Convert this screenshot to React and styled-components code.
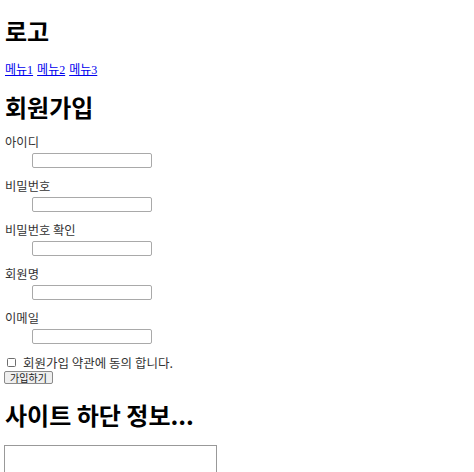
import styled, { createGlobalStyle } from "styled-components";

const GlobalStyle = createGlobalStyle`
  body {
    margin: 0;
    background: #fff;
    font-family: "Noto Sans CJK KR", "Noto Sans", sans-serif;
    color: #222;
  }
`;

const Page = styled.div`
  display: flex;
  flex-direction: column;
  align-items: flex-start;
  padding: 0 5px;
`;

const Title = styled.h1`
  margin: ${(p) => p.$top}px 0 0;
  font-size: 24px;
  line-height: 30px;
  font-weight: 700;
  color: #000;
`;

const Nav = styled.nav`
  display: flex;
  gap: 4px;
  margin-top: 16px;
  font-size: 12px;
  line-height: 16px;
`;

const NavLink = styled.a`
  color: #0000ee;
  text-decoration: underline;
  font-family: "Liberation Serif", "Noto Sans CJK KR", serif;
`;

const Form = styled.form`
  display: flex;
  flex-direction: column;
  align-items: flex-start;
  margin-top: 14px;
`;

const Field = styled.div`
  display: flex;
  flex-direction: column;
  margin-bottom: 12.5px;
`;

const Label = styled.label`
  font-size: 12.3px;
  line-height: 13px;
  padding-bottom: 3px;
  color: #333;
`;

const TextInput = styled.input`
  box-sizing: border-box;
  width: 120px;
  height: 15px;
  margin: 0.5px 0 0 27px;
  padding: 0 2px;
  border: 1px solid #a9a9a9;
  border-radius: 2px;
  font-size: 10px;
`;

const Agree = styled.label`
  display: flex;
  align-items: center;
  gap: 7px;
  margin: -2px 0 0 2px;
  height: 16px;
  font-size: 12.5px;
  color: #333;
`;

const Check = styled.input`
  appearance: none;
  box-sizing: border-box;
  width: 9px;
  height: 9px;
  margin: 0;
  border: 1px solid #6d6d6d;
  border-radius: 1.5px;
  background: #fff;
`;

const Submit = styled.button`
  box-sizing: border-box;
  width: 49px;
  height: 13px;
  margin: 1px 0 0 -1px;
  padding: 0;
  border: 1px solid #8a8a8a;
  border-radius: 2px;
  background: #efefef;
  font-family: inherit;
  font-size: 10px;
  line-height: 11px;
  color: #222;
`;

const FooterBox = styled.textarea`
  box-sizing: border-box;
  width: 213px;
  height: 40px;
  margin: 14.5px 0 0 -1px;
  border: 1px solid #999;
  border-top-width: 1.5px;
  resize: none;
`;

const fields = ["아이디", "비밀번호", "비밀번호 확인", "회원명", "이메일"];

export default function App() {
  return (
    <>
      <GlobalStyle />
      <Page>
        <Title $top={16}>로고</Title>
        <Nav>
          <NavLink href="#">메뉴1</NavLink>
          <NavLink href="#">메뉴2</NavLink>
          <NavLink href="#">메뉴3</NavLink>
        </Nav>
        <Title $top={14}>회원가입</Title>
        <Form onSubmit={(e) => e.preventDefault()}>
          {fields.map((name) => (
            <Field key={name}>
              <Label>{name}</Label>
              <TextInput type="text" />
            </Field>
          ))}
          <Agree>
            <Check type="checkbox" />
            회원가입 약관에 동의 합니다.
          </Agree>
          <Submit type="submit">가입하기</Submit>
        </Form>
        <Title $top={16}>사이트 하단 정보...</Title>
        <FooterBox />
      </Page>
    </>
  );
}
